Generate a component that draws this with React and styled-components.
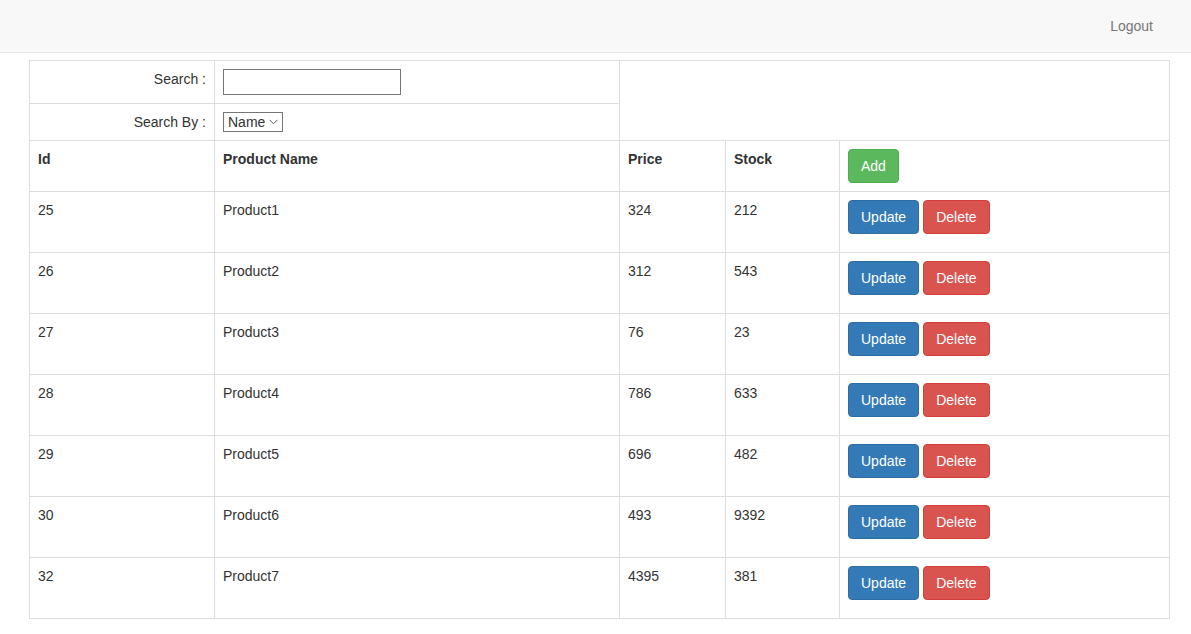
import React from "react";
import styled, { createGlobalStyle } from "styled-components";

const Global = createGlobalStyle`
  html, body { margin: 0; padding: 0; background: #fff; }
  body {
    font-family: "Liberation Sans", Arial, Helvetica, sans-serif;
    font-size: 14px;
    line-height: 1.42857143;
    color: #333;
  }
  * { box-sizing: border-box; }
`;

const Navbar = styled.nav`
  height: 53px;
  background: #f8f8f8;
  border-bottom: 1px solid #e7e7e7;
  display: flex;
  justify-content: flex-end;
  align-items: flex-start;
  padding-right: 23px;
`;

const NavLink = styled.a`
  display: block;
  padding: 16px 15px 15px;
  color: #777;
  text-decoration: none;
  line-height: 20px;
  cursor: pointer;
`;

const Page = styled.main`
  padding: 7px 0 0 29px;
`;

const Table = styled.table`
  border-collapse: collapse;
  border-spacing: 0;
  width: 1140px;
  table-layout: fixed;
  border: 1px solid #ddd;
`;

const Cell = styled.td`
  border: 1px solid #ddd;
  padding: 8px 8px ${(p) => (p.$tall ? "18px" : "8px")};
  vertical-align: top;
  text-align: ${(p) => (p.$right ? "right" : "left")};
  line-height: 20px;
`;

const Head = styled.th`
  border: 1px solid #ddd;
  padding: 8px;
  vertical-align: top;
  text-align: left;
  font-weight: bold;
  line-height: 20px;
`;

const TextInput = styled.input`
  display: block;
  width: 178px;
  height: 26px;
  border: 1px solid #767676;
  border-radius: 0;
  padding: 1px 2px;
  font: 13.33px "Liberation Sans", Arial, sans-serif;
  outline: none;
`;

const SelectWrap = styled.div`
  position: relative;
  width: 60px;
  height: 20px;
`;

const Select = styled.select`
  display: block;
  appearance: none;
  -webkit-appearance: none;
  height: 20px;
  width: 60px;
  border: 1px solid #767676;
  border-radius: 0;
  background: #fff;
  font: 14px "Liberation Sans", Arial, sans-serif;
  color: #333;
  padding: 0 0 0 4px;
  line-height: 18px;
  outline: none;
`;

const Chevron = styled.svg`
  position: absolute;
  right: 5px;
  top: 7px;
  width: 9px;
  height: 6px;
  pointer-events: none;
`;

const palette = {
  success: { bg: "#5cb85c", border: "#4cae4c" },
  primary: { bg: "#337ab7", border: "#2e6da4" },
  danger: { bg: "#d9534f", border: "#d43f3a" },
};

const Button = styled.button`
  display: inline-block;
  height: 34px;
  padding: 6px 12px;
  font: 14px/20px "Liberation Sans", Arial, sans-serif;
  color: #fff;
  background: ${(p) => palette[p.$kind].bg};
  border: 1px solid ${(p) => palette[p.$kind].border};
  border-radius: 4px;
  cursor: pointer;
  vertical-align: middle;
  white-space: nowrap;
`;

const Actions = styled.div`
  display: flex;
  gap: 4px;
`;

const products = [
  { id: 25, name: "Product1", price: 324, stock: 212 },
  { id: 26, name: "Product2", price: 312, stock: 543 },
  { id: 27, name: "Product3", price: 76, stock: 23 },
  { id: 28, name: "Product4", price: 786, stock: 633 },
  { id: 29, name: "Product5", price: 696, stock: 482 },
  { id: 30, name: "Product6", price: 493, stock: 9392 },
  { id: 32, name: "Product7", price: 4395, stock: 381 },
];

export default function App() {
  return (
    <>
      <Global />
      <Navbar>
        <NavLink>Logout</NavLink>
      </Navbar>
      <Page>
        <Table>
          <colgroup>
            <col style={{ width: 185 }} />
            <col style={{ width: 405 }} />
            <col style={{ width: 106 }} />
            <col style={{ width: 114 }} />
            <col style={{ width: 330 }} />
          </colgroup>
          <tbody>
            <tr>
              <Cell $right>Search :</Cell>
              <Cell>
                <TextInput type="text" />
              </Cell>
              <Cell colSpan={3} rowSpan={2} />
            </tr>
            <tr>
              <Cell $right>Search By :</Cell>
              <Cell>
                <SelectWrap>
                  <Select defaultValue="name">
                    <option value="name">Name</option>
                    <option value="price">Price</option>
                    <option value="stock">Stock</option>
                  </Select>
                  <Chevron viewBox="0 0 9 6">
                    <path d="M0.5 0.8 L4.5 4.8 L8.5 0.8" fill="none" stroke="#555" strokeWidth="1" />
                  </Chevron>
                </SelectWrap>
              </Cell>
            </tr>
            <tr>
              <Head>Id</Head>
              <Head>Product Name</Head>
              <Head>Price</Head>
              <Head>Stock</Head>
              <Head>
                <Button $kind="success">Add</Button>
              </Head>
            </tr>
            {products.map((p) => (
              <tr key={p.id}>
                <Cell $tall>{p.id}</Cell>
                <Cell $tall>{p.name}</Cell>
                <Cell $tall>{p.price}</Cell>
                <Cell $tall>{p.stock}</Cell>
                <Cell $tall>
                  <Actions>
                    <Button $kind="primary">Update</Button>
                    <Button $kind="danger">Delete</Button>
                  </Actions>
                </Cell>
              </tr>
            ))}
          </tbody>
        </Table>
      </Page>
    </>
  );
}
